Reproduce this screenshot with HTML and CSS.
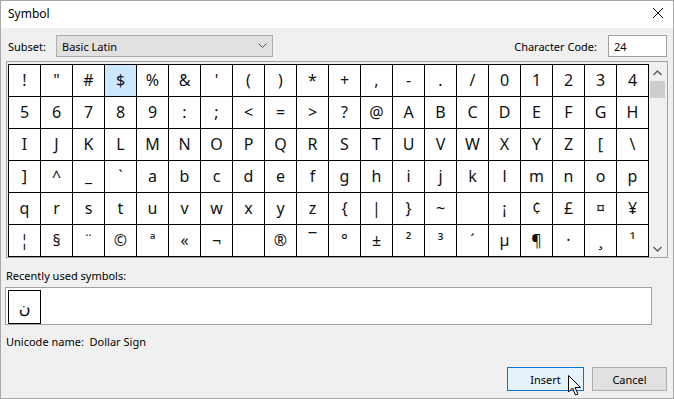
FILE: index.html
```html
<!DOCTYPE html>
<html lang="en">

<head>
  <title>Symbol</title>
  <link rel="stylesheet" href="styles.css">
</head>

<body>
  <div class="window">
    <div class="titlebar">
      <span class="title">Symbol</span>
      <svg class="close" width="12" height="12" viewBox="0 0 12 12">
        <path d="M1 1 L11 11 M11 1 L1 11" stroke="#000" stroke-width="1" fill="none" />
      </svg>
    </div>

    <div class="content">
      <div class="top-row">
        <span class="label">Subset:</span>
        <div class="select">
          <span>Basic Latin</span>
          <svg width="9" height="6" viewBox="0 0 9 6">
            <path d="M0.5 0.5 L4.5 4.5 L8.5 0.5" stroke="#555" fill="none" />
          </svg>
        </div>
        <span class="spacer"></span>
        <span class="label">Character Code:</span>
        <div class="code-input">24</div>
      </div>

      <div class="char-frame">
        <div class="char-grid">
          <div class="cell">!</div><div class="cell">"</div><div class="cell">#</div><div class="cell selected">$</div><div class="cell">%</div>
          <div class="cell">&amp;</div><div class="cell">'</div><div class="cell">(</div><div class="cell">)</div><div class="cell">*</div>
          <div class="cell">+</div><div class="cell">,</div><div class="cell">-</div><div class="cell">.</div><div class="cell">/</div>
          <div class="cell">0</div><div class="cell">1</div><div class="cell">2</div><div class="cell">3</div><div class="cell">4</div>

          <div class="cell">5</div><div class="cell">6</div><div class="cell">7</div><div class="cell">8</div><div class="cell">9</div>
          <div class="cell">:</div><div class="cell">;</div><div class="cell">&lt;</div><div class="cell">=</div><div class="cell">&gt;</div>
          <div class="cell">?</div><div class="cell">@</div><div class="cell">A</div><div class="cell">B</div><div class="cell">C</div>
          <div class="cell">D</div><div class="cell">E</div><div class="cell">F</div><div class="cell">G</div><div class="cell">H</div>

          <div class="cell">I</div><div class="cell">J</div><div class="cell">K</div><div class="cell">L</div><div class="cell">M</div>
          <div class="cell">N</div><div class="cell">O</div><div class="cell">P</div><div class="cell">Q</div><div class="cell">R</div>
          <div class="cell">S</div><div class="cell">T</div><div class="cell">U</div><div class="cell">V</div><div class="cell">W</div>
          <div class="cell">X</div><div class="cell">Y</div><div class="cell">Z</div><div class="cell">[</div><div class="cell">\</div>

          <div class="cell">]</div><div class="cell">^</div><div class="cell">_</div><div class="cell">`</div><div class="cell">a</div>
          <div class="cell">b</div><div class="cell">c</div><div class="cell">d</div><div class="cell">e</div><div class="cell">f</div>
          <div class="cell">g</div><div class="cell">h</div><div class="cell">i</div><div class="cell">j</div><div class="cell">k</div>
          <div class="cell">l</div><div class="cell">m</div><div class="cell">n</div><div class="cell">o</div><div class="cell">p</div>

          <div class="cell">q</div><div class="cell">r</div><div class="cell">s</div><div class="cell">t</div><div class="cell">u</div>
          <div class="cell">v</div><div class="cell">w</div><div class="cell">x</div><div class="cell">y</div><div class="cell">z</div>
          <div class="cell">{</div><div class="cell">|</div><div class="cell">}</div><div class="cell">~</div><div class="cell"></div>
          <div class="cell">¡</div><div class="cell">¢</div><div class="cell">£</div><div class="cell">¤</div><div class="cell">¥</div>

          <div class="cell">¦</div><div class="cell">§</div><div class="cell">¨</div><div class="cell">©</div><div class="cell">ª</div>
          <div class="cell">«</div><div class="cell">¬</div><div class="cell"></div><div class="cell">®</div><div class="cell">¯</div>
          <div class="cell">°</div><div class="cell">±</div><div class="cell">²</div><div class="cell">³</div><div class="cell">´</div>
          <div class="cell">µ</div><div class="cell">¶</div><div class="cell">·</div><div class="cell">¸</div><div class="cell">¹</div>
        </div>

        <div class="scrollbar">
          <div class="scroll-btn">
            <svg width="9" height="6" viewBox="0 0 9 6">
              <path d="M0.5 5 L4.5 1 L8.5 5" stroke="#606060" stroke-width="1.5" fill="none" />
            </svg>
          </div>
          <div class="scroll-thumb"></div>
          <span class="spacer"></span>
          <div class="scroll-btn">
            <svg width="9" height="6" viewBox="0 0 9 6">
              <path d="M0.5 1 L4.5 5 L8.5 1" stroke="#606060" stroke-width="1.5" fill="none" />
            </svg>
          </div>
        </div>
      </div>

      <div class="recent-label">Recently used symbols:</div>
      <div class="recent-box">
        <div class="recent-cell">ن</div>
      </div>

      <div class="unicode-name">Unicode name:&nbsp;&nbsp;Dollar Sign</div>

      <div class="buttons">
        <button class="btn btn-default">Insert</button>
        <button class="btn">Cancel</button>
      </div>
    </div>

    <!-- mouse pointer over the Insert button -->
    <svg class="cursor" width="14" height="24" viewBox="0 0 14 24">
      <path d="M0.5 0.5 L0.5 17 L4.5 13 L7.5 20 L10 19 L7 12.5 L12.5 12.5 Z" fill="#fff" stroke="#000" stroke-width="1" stroke-linejoin="miter" />
    </svg>
  </div>
</body>

</html>
```

FILE: styles.css
```css
body {
  margin: 0;
  font-family: 'Noto Sans', sans-serif;
  font-size: 11px;
  color: #000;
}

.window {
  position: relative;
  width: 674px;
  height: 399px;
  box-sizing: border-box;
  border: 1px solid #a8a8a8;
  background-color: #f0f0f0;
  overflow: hidden;
}

.titlebar {
  display: flex;
  align-items: center;
  height: 27px;
  padding: 0 8px 0 7px;
  background-color: #fff;
}

.title {
  font-size: 12px;
  flex: 1;
  margin-top: -3px;
}

.close {
  margin-top: -4px;
  margin-right: 1px;
}

.content {
  padding: 0 6px 0 5px;
}

.top-row {
  display: flex;
  align-items: center;
  height: 22px;
  margin-top: 7px;
}

.label {
  margin-left: 2px;
}

.select {
  display: flex;
  align-items: center;
  justify-content: space-between;
  width: 217px;
  height: 22px;
  box-sizing: border-box;
  margin-left: 10px;
  padding: 0 5px 0 5px;
  background-color: #e1e1e1;
  border: 1px solid #adadad;
}

.spacer {
  flex: 1;
}

.code-input {
  width: 59px;
  height: 22px;
  box-sizing: border-box;
  margin-left: 11px;
  padding: 3px 5px;
  background-color: #fff;
  border: 1px solid #a0a0a0;
}

/* character table */
.char-frame {
  display: flex;
  width: 662px;
  box-sizing: border-box;
  margin-top: 4px;
  padding: 2px 1px 0 1px;
  border: 1px solid #a0a0a0;
  background-color: #f0f0f0;
}

.char-grid {
  display: grid;
  grid-template-columns: repeat(20, 31px);
  grid-template-rows: repeat(6, 31px);
  gap: 1px;
  padding: 1px;
  background-color: #000;
}

.cell {
  display: flex;
  align-items: center;
  justify-content: center;
  background-color: #fff;
  font-size: 16px;
  line-height: 31px;
  color: #111;
}

.cell.selected {
  background-color: #cce8ff;
}

.scrollbar {
  display: flex;
  flex-direction: column;
  width: 17px;
  background-color: #f0f0f0;
}

.scroll-btn {
  display: flex;
  align-items: center;
  justify-content: center;
  height: 17px;
}

.scroll-thumb {
  height: 17px;
  margin: 0 1px;
  background-color: #cdcdcd;
}

.recent-label {
  margin-top: 10px;
  line-height: 16px;
}

.recent-box {
  width: 647px;
  height: 38px;
  box-sizing: border-box;
  margin-top: 3px;
  margin-left: -1px;
  padding: 2px;
  background-color: #fff;
  border: 1px solid #a0a0a0;
}

.recent-cell {
  width: 33px;
  height: 34px;
  box-sizing: border-box;
  border: 1px solid #000;
  font-family: 'DejaVu Sans', sans-serif;
  font-size: 16px;
  text-align: center;
  line-height: 36px;
}

.unicode-name {
  margin-top: 9px;
  line-height: 16px;
}

.buttons {
  display: flex;
  justify-content: flex-end;
  gap: 8px;
  margin-top: 17px;
}

.btn {
  width: 75px;
  height: 24px;
  font-family: 'Noto Sans', sans-serif;
  font-size: 11px;
  color: #000;
  background-color: #e1e1e1;
  border: 1px solid #adadad;
  padding: 0;
}

.btn-default {
  width: 77px;
  background-color: #e5f1fb;
  border-color: #0078d7;
}

.cursor {
  position: absolute;
  left: 567px;
  top: 374px;
}
```
